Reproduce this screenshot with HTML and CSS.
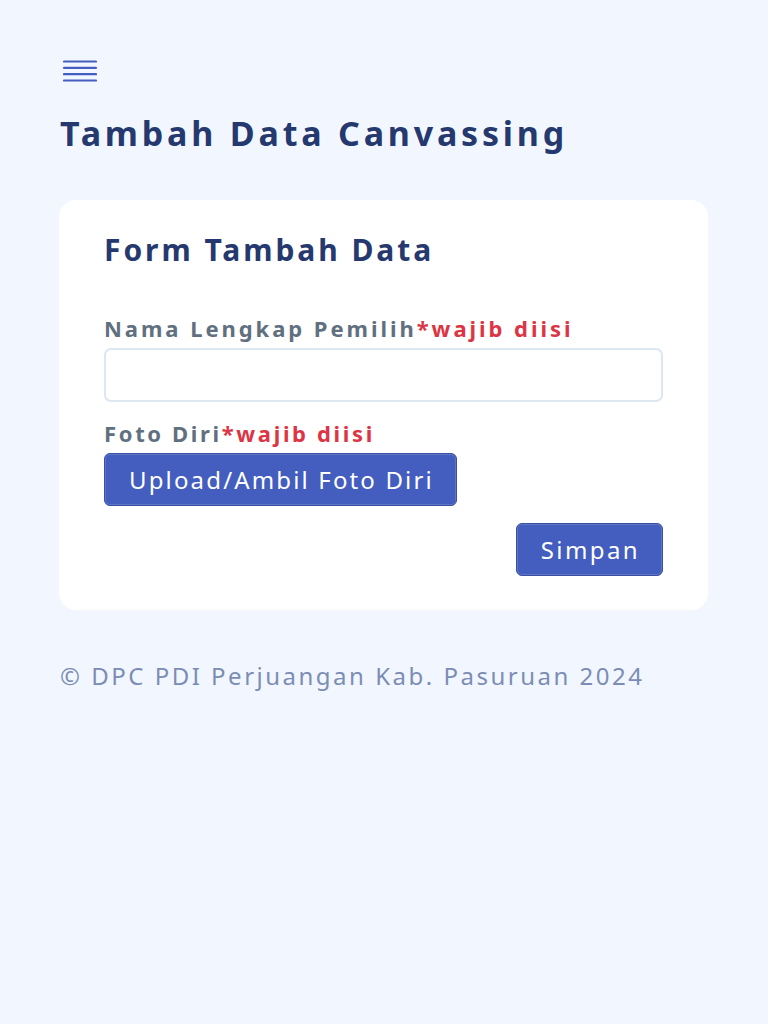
FILE: index.html
```html
<!DOCTYPE html>
<html lang="id">
<head>
<meta charset="utf-8">
<title>Tambah Data Canvassing</title>
<link rel="stylesheet" href="styles.css">
</head>
<body>
<div class="page">
  <header class="topbar">
    <button class="burger" aria-label="Menu">
      <svg width="34" height="22" viewBox="0 0 34 22" aria-hidden="true">
        <g stroke="#435ebe" stroke-width="2.2" stroke-linecap="round">
          <line x1="1" y1="1.5" x2="33" y2="1.5"/>
          <line x1="1" y1="7.8" x2="33" y2="7.8"/>
          <line x1="1" y1="14.2" x2="33" y2="14.2"/>
          <line x1="1" y1="20.5" x2="33" y2="20.5"/>
        </g>
      </svg>
    </button>
  </header>
  <h1 class="page-title">Tambah Data Canvassing</h1>
  <section class="card">
    <h2 class="card-title">Form Tambah Data</h2>
    <form class="form">
      <div class="field">
        <label class="label" for="nama">Nama Lengkap Pemilih<span class="req">*wajib diisi</span></label>
        <input class="input" id="nama" type="text">
      </div>
      <div class="field">
        <label class="label label-short">Foto Diri<span class="req">*wajib diisi</span></label>
        <div><button type="button" class="btn btn-upload">Upload/Ambil Foto Diri</button></div>
      </div>
      <div class="actions">
        <button type="button" class="btn">Simpan</button>
      </div>
    </form>
  </section>
  <footer class="footer">© DPC PDI Perjuangan Kab. Pasuruan 2024</footer>
</div>
</body>
</html>
```
FILE: styles.css
```css
html, body {
  margin: 0;
  padding: 0;
  background: #f2f7ff;
}
body {
  font-family: "Noto Sans", "Open Sans", sans-serif;
  color: #607080;
}
.page {
  padding: 60px 60px 0 59px;
}
.topbar {
  display: flex;
  padding-left: 4px;
}
.burger {
  border: 0;
  background: none;
  padding: 0;
  display: block;
  line-height: 0;
}
.page-title {
  margin: 31px 0 0 1px;
  font-size: 34px;
  line-height: 40px;
  font-weight: 700;
  letter-spacing: 3.8px;
  color: #25396f;
}
.card {
  margin-top: 47px;
  width: 649px;
  box-sizing: border-box;
  background: #fff;
  border-radius: 17px;
  padding: 30px 45px 34px 45px;
}
.card-title {
  margin: 0;
  font-size: 30px;
  line-height: 40px;
  font-weight: 700;
  letter-spacing: 2.95px;
  color: #25396f;
}
.form {
  margin-top: 45px;
  display: flex;
  flex-direction: column;
}
.field {
  display: flex;
  flex-direction: column;
  gap: 7px;
  margin-bottom: 18px;
}
.label {
  font-size: 22px;
  line-height: 26px;
  font-weight: 700;
  letter-spacing: 2.95px;
  color: #607080;
}
.label-short {
  letter-spacing: 2.65px;
}
.req {
  color: #dc3545;
}
.input {
  box-sizing: border-box;
  height: 54px;
  width: 100%;
  border: 2px solid #dce7f1;
  border-radius: 7px;
  background: #fff;
  font: inherit;
  font-size: 24px;
}
.btn {
  box-sizing: border-box;
  height: 53px;
  padding: 0 22px 0 24px;
  background: #435ebe;
  border: 1.5px solid #3950a2;
  border-radius: 6px;
  color: #fff;
  font-family: inherit;
  font-size: 24px;
  letter-spacing: 2.4px;
  line-height: 1;
  box-shadow: inset 0 0 0 1px rgba(255,255,255,0.15);
}
.btn-upload {
  letter-spacing: 2.15px;
}
.actions {
  display: flex;
  justify-content: flex-end;
  margin-top: -1px;
}
.footer {
  margin-top: 50px;
  font-size: 24px;
  line-height: 32px;
  letter-spacing: 2.5px;
  color: #7c8db5;
  padding-left: 1px;
}
```
